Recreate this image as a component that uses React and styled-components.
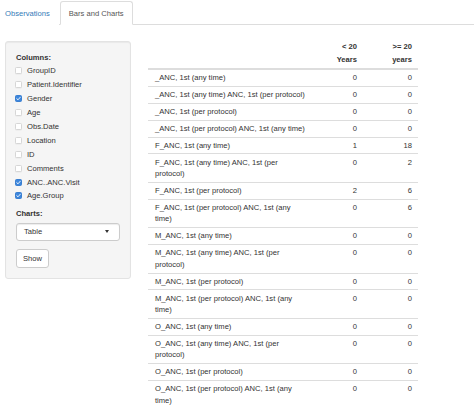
import React from "react";
import styled, { createGlobalStyle } from "styled-components";

const GlobalStyle = createGlobalStyle`
  html, body { margin: 0; padding: 0; background: #fff; }
  body {
    font-family: "Liberation Sans", Arial, sans-serif;
    font-size: 7.6px;
    color: #333;
  }
  * { box-sizing: border-box; }
`;

const Page = styled.div`
  width: 474px;
  height: 417px;
  overflow: hidden;
`;

const Tabs = styled.div`
  display: flex;
  margin-left: -4px;
  padding-top: 1px;
  height: 25px;
  border-bottom: 1px solid #ddd;
`;

const Tab = styled.div`
  height: 24px;
  line-height: 23px;
  padding: 0 8px;
  margin-right: 1px;
  border: 1px solid ${(p) => (p.$active ? "#ddd" : "transparent")};
  border-bottom-color: ${(p) => (p.$active ? "#fff" : "transparent")};
  border-radius: 3px 3px 0 0;
  background: #fff;
  color: ${(p) => (p.$active ? "#555" : "#337ab7")};
  white-space: nowrap;
`;

const Main = styled.div`
  display: flex;
  align-items: flex-start;
  gap: 17px;
  padding-left: 5px;
  margin-top: 16px;
`;

const Well = styled.div`
  width: 126px;
  padding: 10px;
  background: #f5f5f5;
  border: 1px solid #e3e3e3;
  border-radius: 3px;
  box-shadow: inset 0 1px 1px rgba(0, 0, 0, 0.05);
`;

const GroupLabel = styled.div`
  font-weight: bold;
  line-height: 11px;
  margin-top: ${(p) => p.$mt || 0}px;
  margin-bottom: ${(p) => p.$mb || 0}px;
`;

const CheckList = styled.div`
  display: flex;
  flex-direction: column;
`;

const CheckItem = styled.div`
  display: flex;
  align-items: center;
  height: 13.9px;
  gap: 5px;
`;

const Box = styled.span`
  width: 7px;
  height: 7px;
  margin-left: -1px;
  border-radius: 1.5px;
  display: flex;
  align-items: center;
  justify-content: center;
  background: ${(p) => (p.$checked ? "#3d86dc" : "#fff")};
  border: 1px solid ${(p) => (p.$checked ? "#3a7fd0" : "#d6d6d6")};
  box-shadow: ${(p) => (p.$checked ? "none" : "0 0.5px 0.5px rgba(0,0,0,0.06)")};
`;

const Select = styled.div`
  width: 104px;
  height: 18px;
  display: flex;
  align-items: center;
  justify-content: space-between;
  padding: 0 10px 0 7px;
  background: #fff;
  border: 1px solid #ccc;
  border-radius: 3px;
  box-shadow: inset 0 1px 1px rgba(0, 0, 0, 0.075);
`;

const Caret = styled.span`
  width: 0;
  height: 0;
  border-left: 2.5px solid transparent;
  border-right: 2.5px solid transparent;
  border-top: 3px solid #333;
`;

const Button = styled.div`
  display: inline-flex;
  align-items: center;
  height: 19px;
  margin-top: 8px;
  padding: 0 6px;
  background: #fff;
  border: 1px solid #ccc;
  border-radius: 3px;
  color: #333;
`;

const Table = styled.table`
  width: 270px;
  table-layout: fixed;
  border-collapse: separate;
  border-spacing: 0;
  font-size: 7.6px;
`;

const Th = styled.th`
  font-weight: bold;
  line-height: 12.5px;
  text-align: ${(p) => (p.$num ? "right" : "left")};
  vertical-align: bottom;
  padding: 0 6px 2px 7px;
  border-bottom: 2px solid #ddd;
`;

const Td = styled.td`
  line-height: 11.6px;
  vertical-align: top;
  text-align: ${(p) => (p.$num ? "right" : "left")};
  padding: 2.15px 6px 2.15px 7px;
  border-top: 1px solid #ddd;
  tr:first-child > & {
    border-top: 0;
  }
`;

const columns = [
  ["GroupID", false],
  ["Patient.Identifier", false],
  ["Gender", true],
  ["Age", false],
  ["Obs.Date", false],
  ["Location", false],
  ["ID", false],
  ["Comments", false],
  ["ANC..ANC.Visit", true],
  ["Age.Group", true],
];

const rows = [
  ["_ANC, 1st (any time)", 0, 0],
  ["_ANC, 1st (any time) ANC, 1st (per protocol)", 0, 0],
  ["_ANC, 1st (per protocol)", 0, 0],
  ["_ANC, 1st (per protocol) ANC, 1st (any time)", 0, 0],
  ["F_ANC, 1st (any time)", 1, 18],
  ["F_ANC, 1st (any time) ANC, 1st (per protocol)", 0, 2],
  ["F_ANC, 1st (per protocol)", 2, 6],
  ["F_ANC, 1st (per protocol) ANC, 1st (any time)", 0, 6],
  ["M_ANC, 1st (any time)", 0, 0],
  ["M_ANC, 1st (any time) ANC, 1st (per protocol)", 0, 0],
  ["M_ANC, 1st (per protocol)", 0, 0],
  ["M_ANC, 1st (per protocol) ANC, 1st (any time)", 0, 0],
  ["O_ANC, 1st (any time)", 0, 0],
  ["O_ANC, 1st (any time) ANC, 1st (per protocol)", 0, 0],
  ["O_ANC, 1st (per protocol)", 0, 0],
  ["O_ANC, 1st (per protocol) ANC, 1st (any time)", 0, 0],
];

function Check({ checked }) {
  return (
    <Box $checked={checked}>
      {checked && (
        <svg width="5" height="5" viewBox="0 0 10 10">
          <path d="M1.5 5.2 L4 7.6 L8.6 2.4" fill="none" stroke="#fff" strokeWidth="1.8" strokeLinecap="round" strokeLinejoin="round" />
        </svg>
      )}
    </Box>
  );
}

export default function App() {
  return (
    <Page>
      <GlobalStyle />
      <Tabs>
        <Tab>Observations</Tab>
        <Tab $active>Bars and Charts</Tab>
      </Tabs>
      <Main>
        <Well>
          <GroupLabel $mb={1}>Columns:</GroupLabel>
          <CheckList>
            {columns.map(([name, checked]) => (
              <CheckItem key={name}>
                <Check checked={checked} />
                <span>{name}</span>
              </CheckItem>
            ))}
          </CheckList>
          <GroupLabel $mt={5.5} $mb={3.5}>Charts:</GroupLabel>
          <Select>
            <span>Table</span>
            <Caret />
          </Select>
          <Button>Show</Button>
        </Well>
        <Table>
          <colgroup>
            <col style={{ width: 166 }} />
            <col style={{ width: 49 }} />
            <col style={{ width: 55 }} />
          </colgroup>
          <thead>
            <tr>
              <Th></Th>
              <Th $num>&lt; 20<br />Years</Th>
              <Th $num>&gt;= 20<br />years</Th>
            </tr>
          </thead>
          <tbody>
            {rows.map(([label, a, b]) => (
              <tr key={label}>
                <Td>{label}</Td>
                <Td $num>{a}</Td>
                <Td $num>{b}</Td>
              </tr>
            ))}
          </tbody>
        </Table>
      </Main>
    </Page>
  );
}
